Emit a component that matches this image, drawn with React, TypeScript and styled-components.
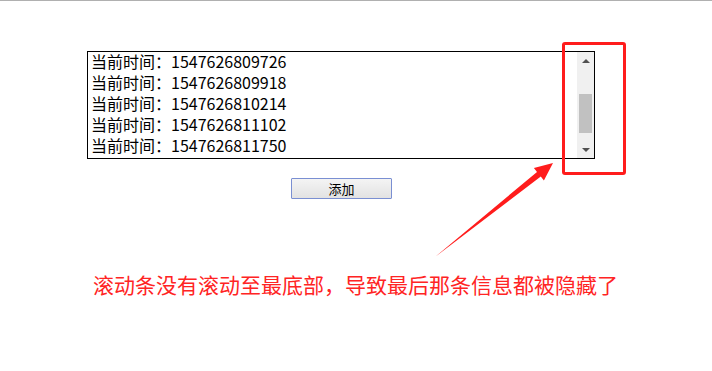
import React from 'react';
import styled, { createGlobalStyle } from 'styled-components';

const GlobalStyle = createGlobalStyle`
  html, body {
    margin: 0;
    padding: 0;
    background: #ffffff;
  }
  body {
    font-family: "Noto Sans CJK SC", "Noto Sans", sans-serif;
  }
`;

const Page = styled.div`
  position: relative;
  width: 712px;
  height: 370px;
  border-top: 1px solid #b0b0b0;
  padding: 50px 0 0 87px;
  box-sizing: border-box;
  overflow: hidden;
`;

const Demo = styled.div`
  width: 508px;
  display: flex;
  flex-direction: column;
  align-items: center;
  gap: 19px;
`;

const ListBox = styled.div`
  width: 508px;
  height: 108px;
  box-sizing: border-box;
  border: 1px solid #000;
  display: flex;
  overflow: hidden;
`;

const Lines = styled.div`
  flex: 1;
  overflow: hidden;
  padding-left: 3px;
`;

// scrolled down by a pixel, like the real list
const LinesInner = styled.div`
  margin-top: -1px;
`;

const Line = styled.div`
  font-size: 16px;
  line-height: 21px;
  height: 21px;
  color: #000;
  white-space: nowrap;
`;

const ScrollTrack = styled.div`
  width: 17px;
  background: #f0f0f0;
  display: flex;
  flex-direction: column;
  align-items: center;
`;

const ArrowBtn = styled.div<{ $down?: boolean }>`
  height: 17px;
  width: 17px;
  display: flex;
  align-items: center;
  justify-content: center;
  &::after {
    content: '';
    width: 0;
    height: 0;
    border-left: 4px solid transparent;
    border-right: 4px solid transparent;
    ${(p) => (p.$down ? 'border-top: 4px solid #505050;' : 'border-bottom: 4px solid #505050;')}
  }
`;

const TrackSpace = styled.div`
  flex: 1;
  width: 100%;
  display: flex;
  justify-content: center;
  padding-top: 25px;
  box-sizing: border-box;
`;

const Thumb = styled.div`
  width: 13px;
  height: 39px;
  background: #c1c1c1;
`;

const AddButton = styled.button`
  width: 101px;
  height: 21px;
  box-sizing: border-box;
  border: 1px solid #7a8fd2;
  border-radius: 1px;
  background: linear-gradient(#f4f4f4, #e2e2e2);
  font-family: "Noto Sans CJK SC", sans-serif;
  font-size: 13px;
  line-height: 17px;
  color: #000;
  padding: 0;
  margin-left: 1px;
`;

const Caption = styled.p`
  margin: 71px 0 0 6px;
  font-size: 21px;
  line-height: 28px;
  color: #ff2424;
  white-space: nowrap;
`;

const Highlight = styled.div`
  position: absolute;
  left: 562px;
  top: 41px;
  width: 64px;
  height: 133px;
  box-sizing: border-box;
  border: 3px solid #ff1c1c;
  border-radius: 3px;
`;

const Overlay = styled.svg`
  position: absolute;
  left: 0;
  top: 0;
  pointer-events: none;
`;

const times = [
  '1547626809726',
  '1547626809918',
  '1547626810214',
  '1547626811102',
  '1547626811750',
];

const App = () => {
  return (
    <>
      <GlobalStyle />
      <Page>
        <Demo>
          <ListBox>
            <Lines>
              <LinesInner>
                {times.map((t) => (
                  <Line key={t}>当前时间：{t}</Line>
                ))}
              </LinesInner>
            </Lines>
            <ScrollTrack>
              <ArrowBtn />
              <TrackSpace>
                <Thumb />
              </TrackSpace>
              <ArrowBtn $down />
            </ScrollTrack>
          </ListBox>
          <AddButton type="button">添加</AddButton>
        </Demo>
        <Caption>滚动条没有滚动至最底部，导致最后那条信息都被隐藏了</Caption>
        <Highlight />
        <Overlay width="712" height="370" viewBox="0 0 712 370">
          <polygon
            points="435,256 537,170.9 533.9,166.9 553,162 543.9,179.5 540.8,175.5"
            fill="#ff1c1c"
          />
        </Overlay>
      </Page>
    </>
  );
};

export default App;
